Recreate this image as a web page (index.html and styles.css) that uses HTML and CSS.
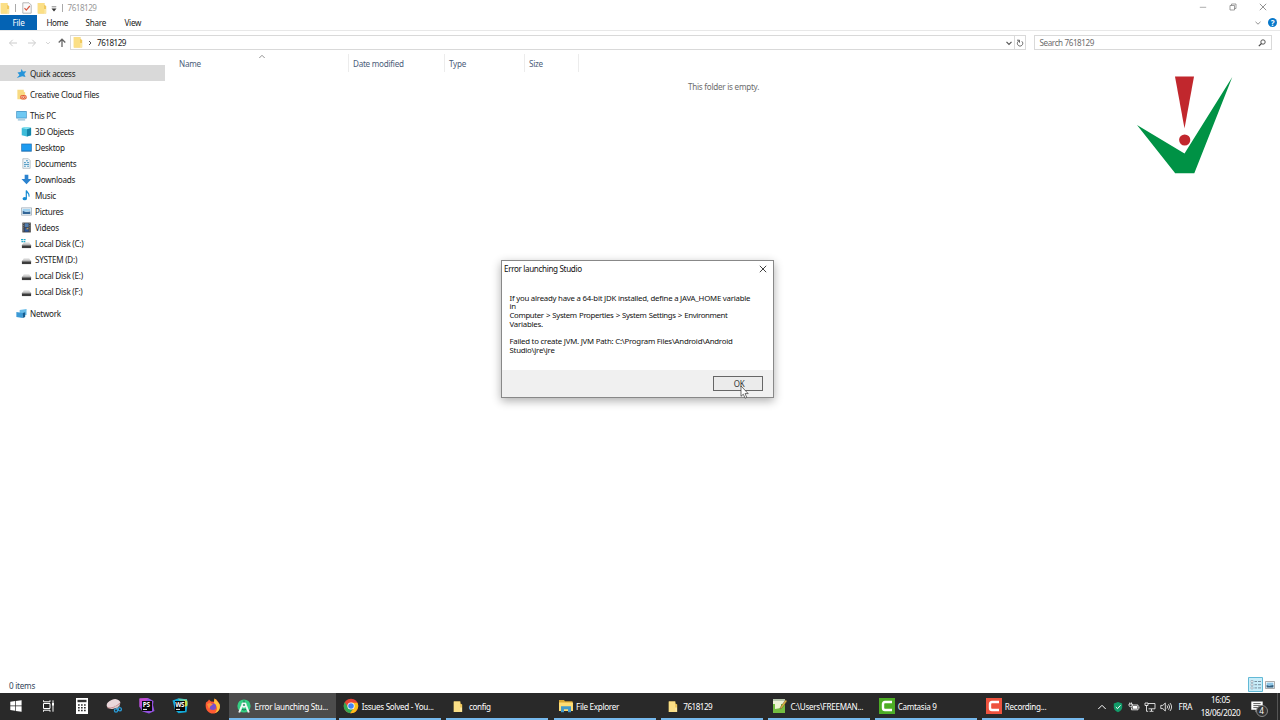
FILE: index.html
```html
<!DOCTYPE html>
<html>
<head>
    <meta charset="utf-8">
    <title>7618129</title>
    <link rel="stylesheet" href="styles.css">
</head>
<body>
    <svg class="defs">
        <symbol id="folder" viewBox="0 0 10 12">
            <path d="M.8 1h6.7v2l1.7 1v7.5H.8z" fill="#f0c95e"/>
            <path d="M.8 1H7v10.5H.8z" fill="#fbdf86"/>
            <path d="M7.3 7h1.5v4.2H7.3z" fill="#fff0b5"/>
        </symbol>
        <symbol id="disk" viewBox="0 0 12 12">
            <path d="M3 4.8h6l2 3.2H1z" fill="#d3d3d3"/>
            <path d="M1 7.5h10V11H1z" fill="#3c3c3c"/>
            <path d="M1 7.5h10v1H1z" fill="#888"/>
        </symbol>
        <symbol id="close" viewBox="0 0 8 8">
            <path d="M.8.8l6.4 6.4M7.2.8L.8 7.2" fill="none" stroke="currentColor" stroke-width=".8"/>
        </symbol>
    </svg>

    <div class="window">
        <div class="titlebar">
            <svg class="title-folder" viewBox="0 0 10 12"><use href="#folder"/></svg>
            <span class="divider"></span>
            <svg class="title-check" viewBox="0 0 10 12"><path d="M.8.8H7L9.2 3v8.2H.8z" fill="#fafafa" stroke="#999" stroke-width=".7"/><path d="M2.5 6.2l1.8 2L7.8 4" fill="none" stroke="#d65a45" stroke-width="1.2"/></svg>
            <svg class="title-folder two" viewBox="0 0 10 12"><use href="#folder"/></svg>
            <svg class="title-drop" viewBox="0 0 6 6"><path d="M.7.8h4.6" stroke="#555" stroke-width=".7"/><path d="M.5 2.5h5L3 5.4z" fill="#333"/></svg>
            <span class="divider"></span>
            <span class="title-name">7618129</span>
            <div class="controls">
                <svg viewBox="0 0 8 8"><path d="M.8 4.3h6.4" stroke="#999" stroke-width=".8"/></svg>
                <svg viewBox="0 0 8 8"><path d="M1 2.5h4.5V7H1zM2.5 2.5V1H7v4.5H5.5" fill="none" stroke="#777" stroke-width=".7"/></svg>
                <svg viewBox="0 0 8 8"><use href="#close"/></svg>
            </div>
        </div>

        <div class="tabs">
            <span class="file">File</span>
            <span class="tab-home">Home</span>
            <span class="tab-share">Share</span>
            <span>View</span>
            <svg class="expand" viewBox="0 0 8 8"><path d="M1.5 2.8L4 5.2l2.5-2.4" fill="none" stroke="#888" stroke-width=".9"/></svg>
            <span class="help">?</span>
        </div>

        <div class="navbar">
            <svg class="arrow-back" viewBox="0 0 10 10"><path d="M9 5H1.5M4.7 1.8L1.5 5l3.2 3.2" fill="none" stroke="#ccc" stroke-width="1"/></svg>
            <svg class="arrow-next" viewBox="0 0 10 10"><path d="M1 5h7.5M5.3 1.8L8.5 5 5.3 8.2" fill="none" stroke="#ccc" stroke-width="1"/></svg>
            <svg class="arrow-drop" viewBox="0 0 6 6"><path d="M1 2l2 2 2-2" fill="none" stroke="#ccc" stroke-width=".8"/></svg>
            <svg class="arrow-up" viewBox="0 0 10 10"><path d="M5 9V1.2M1.7 4.5L5 1.2l3.3 3.3" fill="none" stroke="#666" stroke-width="1.3"/></svg>
            <div class="address">
                <svg class="address-folder" viewBox="0 0 10 12"><use href="#folder"/></svg>
                <svg class="crumb" viewBox="0 0 4 6"><path d="M1 1l2 2-2 2" fill="none" stroke="#444" stroke-width=".9"/></svg>
                <span class="crumb-name">7618129</span>
                <svg class="address-drop" viewBox="0 0 8 8"><path d="M1.5 2.8L4 5.3l2.5-2.5" fill="none" stroke="#555" stroke-width="1.2"/></svg>
                <div class="refresh">
                    <svg viewBox="0 0 8 8"><path d="M3.2 1.8A2.7 2.7 0 1 0 5.8 2.3M1 1.2h2.5v2.5" fill="none" stroke="#555" stroke-width=".9"/></svg>
                </div>
            </div>
            <div class="search">
                <span>Search 7618129</span>
                <svg viewBox="0 0 8 8"><circle cx="5" cy="3" r="2.2" fill="none" stroke="#444" stroke-width=".9"/><path d="M3.5 4.5L.8 7.2" stroke="#444" stroke-width="1.1"/></svg>
            </div>
        </div>

        <div class="main">
            <div class="sidebar">
                <div class="item selected">
                    <svg viewBox="0 0 12 12"><path d="M6 1.2l1.6 2.6 3.7-.3-2.3 3 1.4 3.2-3.6-.8L.8 11l3-3.3L1.6 5l3.5-.6z" fill="#2694d9"/></svg>
                    <span>Quick access</span>
                </div>
                <div class="item gap">
                    <svg viewBox="0 0 12 12"><path d="M1.5.8h7v2l1.5 1v7.4H1.5z" fill="#f8da82"/><rect x="4.5" y="6.5" width="7.2" height="5" rx="2.3" fill="#e2592c"/><circle cx="6.8" cy="9" r="1.2" fill="none" stroke="#fff" stroke-width=".5"/><circle cx="9.3" cy="9" r="1.2" fill="none" stroke="#fff" stroke-width=".5"/></svg>
                    <span>Creative Cloud Files</span>
                </div>
                <div class="item gap">
                    <svg viewBox="0 0 12 12"><path d="M.3 1.2h11.4v8H.3z" fill="#3b8fc4"/><path d="M1 2h10v6.4H1z" fill="#6ec8f2"/><path d="M2 10.8h8" stroke="#6aa6c5"/></svg>
                    <span>This PC</span>
                </div>
                <div class="item sub">
                    <svg viewBox="0 0 12 12"><path d="M.8 2.3L5 1l6 1v8l-4.5 1.5L.8 10z" fill="#3dbcd9"/><path d="M6.5 3.5L11 2v8l-4.5 1.5z" fill="#1585a9"/><path d="M.8 2.3L5 1l6 1-4.5 1.5z" fill="#8ce3f0"/></svg>
                    <span>3D Objects</span>
                </div>
                <div class="item sub">
                    <svg viewBox="0 0 12 12"><path d="M.3 1.8h11.4v8.7H.3z" fill="#1769ae"/><path d="M1 2.5h10v6.9H1z" fill="#1d9bf0"/></svg>
                    <span>Desktop</span>
                </div>
                <div class="item sub">
                    <svg viewBox="0 0 12 12"><path d="M2 .8h6l2 2v8.5H2z" fill="#edf5fa" stroke="#8d9aa3" stroke-width=".6"/><path d="M5.5 3h2M3.3 5h2M6.7 5h2M3.3 7h5.4M3.3 9h2M6.7 9h2" stroke="#3c8dbb" stroke-width="1"/></svg>
                    <span>Documents</span>
                </div>
                <div class="item sub">
                    <svg viewBox="0 0 12 12"><path d="M4 .8h4v4.7h3.5L6 11.3.5 5.5H4z" fill="#2c83cf"/></svg>
                    <span>Downloads</span>
                </div>
                <div class="item sub">
                    <svg viewBox="0 0 12 12"><ellipse cx="4.1" cy="9.5" rx="2.4" ry="1.8" fill="#168bd2"/><path d="M5.8 9.5V.5c.5 2.4 4 3 3 6.8" fill="none" stroke="#168bd2" stroke-width="1.3"/></svg>
                    <span>Music</span>
                </div>
                <div class="item sub">
                    <svg viewBox="0 0 12 12"><path d="M.5 2h11v8H.5z" fill="#eff7fb" stroke="#899aa6" stroke-width=".7"/><path d="M1.8 3.3h8.4V6L8.2 5.5 5 6.5l-3.2-1z" fill="#a1d2f1"/><path d="M1.8 5.2l3.2 1.3 5.2-.5v2.8H1.8z" fill="#326596"/></svg>
                    <span>Pictures</span>
                </div>
                <div class="item sub">
                    <svg viewBox="0 0 12 12"><path d="M1.5.6h9.2v10.8H1.5z" fill="#424242"/><path d="M4 1.4h4.3v4.2H4z" fill="#527eaf"/><path d="M4 6.3h4.3v4.3H4z" fill="#29559a"/><path d="M5 8l3-2v2z" fill="#d7a743"/><path d="M2.7 1.2v9.8M9.5 1.2v9.8" stroke="#999" stroke-width=".8" stroke-dasharray="1 1"/></svg>
                    <span>Videos</span>
                </div>
                <div class="item sub">
                    <svg viewBox="0 0 12 12"><use href="#disk"/><path d="M0 1.2h2.2v1.3H0zM2.8 1.2H5v1.3H2.8zM.5 3.2h2.2v1.3H.5zM3.2 3.2h1.5v1.3H3.2z" fill="#25aac9"/></svg>
                    <span>Local Disk (C:)</span>
                </div>
                <div class="item sub">
                    <svg viewBox="0 0 12 12"><use href="#disk"/></svg>
                    <span>SYSTEM (D:)</span>
                </div>
                <div class="item sub">
                    <svg viewBox="0 0 12 12"><use href="#disk"/></svg>
                    <span>Local Disk (E:)</span>
                </div>
                <div class="item sub">
                    <svg viewBox="0 0 12 12"><use href="#disk"/></svg>
                    <span>Local Disk (F:)</span>
                </div>
                <div class="item gap">
                    <svg viewBox="0 0 12 12"><path d="M4 2.2L11.5 1v6.5L4 8.5z" fill="#69bce8"/><path d="M.4 4.4l7 1.1V11l-7-1.3z" fill="#3c9ad6"/><path d="M7.4 5.5l2.6-1V9.8L7.4 11z" fill="#175d91"/></svg>
                    <span>Network</span>
                </div>
            </div>

            <div class="content">
                <div class="columns">
                    <span>Name<svg class="sort" viewBox="0 0 8 5"><path d="M1.3 4L4 1.3 6.7 4" fill="none" stroke="#777" stroke-width=".8"/></svg></span>
                    <span>Date modified</span>
                    <span>Type</span>
                    <span>Size</span>
                </div>
                <div class="empty">This folder is empty.</div>
            </div>
        </div>

        <div class="status">
            <span>0 items</span>
            <svg class="view-details" viewBox="0 0 15 15"><path d="M.5.5h14v14H.5z" fill="#c8edf9" stroke="#62b9d6"/><path d="M3 3.5h2v2H3zM3 6.7h2v2H3zM3 9.9h2v2H3z" fill="#fff" stroke="#789" stroke-width=".5"/><path d="M6.5 4.5h2.5M10 4.5h3M6.5 7.7h2.5M10 7.7h3M6.5 10.9h2.5M10 10.9h3" stroke="#678" stroke-width=".8"/></svg>
            <svg class="view-large" viewBox="0 0 10 8"><path d="M.5.5h9v7h-9z" fill="#fff" stroke="#888" stroke-width=".7"/><path d="M1.6 1.6h6.8v4.8H1.6z" fill="#8fc6e6"/><path d="M1.6 4l2.5 1 4.3-1v2.4H1.6z" fill="#345e7d"/></svg>
        </div>
    </div>

    <svg class="logo" viewBox="0 0 96 98">
        <path d="M38 .6h19L47.5 52.5z" fill="#c1272d"/>
        <circle cx="47.7" cy="64" r="5.6" fill="#c1272d"/>
        <path d="M0 49L47.5 77.6 95.3 1 57.3 97.3H38.2z" fill="#009245"/>
    </svg>

    <div class="dialog">
        <div class="dialog-title">
            <span>Error launching Studio</span>
            <svg viewBox="0 0 8 8"><use href="#close"/></svg>
        </div>
        <div class="dialog-body">
            <p>If you already have a 64-bit JDK installed, define a JAVA_HOME variable<br>in<br><span class="path">Computer &gt; System Properties &gt; System Settings &gt; Environment</span><br>Variables.</p>
            <p>Failed to create JVM. JVM Path: C:\Program Files\Android\Android<br>Studio\jre\jre</p>
        </div>
        <div class="dialog-footer">
            <button>OK</button>
        </div>
        <svg class="cursor" viewBox="0 0 9 14"><path d="M1 1v10.3l2.3-2.1 1.8 4 1.7-.8L5 8.6h3.2z" fill="#fff" stroke="#333" stroke-width=".7"/></svg>
    </div>

    <div class="taskbar">
        <div class="pinned">
            <svg viewBox="0 0 16 16"><path d="M2.3 3.8l4.8-.7v4.5H2.3zM7.8 3l5.8-.8v5.4H7.8zM2.3 8.3h4.8v4.5l-4.8-.7zM7.8 8.3h5.8v5.4l-5.8-.8z" fill="#fff"/></svg>
            <svg viewBox="0 0 16 16"><path d="M2.5 5.5H9v5H2.5zM2.5 2.3v1.5H9V2.3M2.5 13.7v-1.5H9v1.5M12 2.3v11.4" fill="none" stroke="#fff" stroke-width="1"/><path d="M11 5h2v2.5h-2z" fill="#fff"/></svg>
            <svg viewBox="0 0 16 16"><path d="M2 0h12v16H2z" fill="#fff"/><path d="M3.5 1.8h9v2.4h-9z" fill="#333"/><path d="M4 7h8.5M4 9.8h8.5M4 12.6h8.5" stroke="#333" stroke-width="1.5" stroke-dasharray="1.7 1.3"/></svg>
            <svg viewBox="0 0 16 16"><ellipse cx="7.5" cy="6" rx="7" ry="4.6" transform="rotate(-18 7.5 6)" fill="#ead7da"/><path d="M1.5 9.8Q8 11 14 5" fill="none" stroke="#c98c90"/><path d="M8.5 7.5l4 4.5M14 7.5L10 11" stroke="#ccc" stroke-width=".8"/><circle cx="10" cy="12.5" r="1.6" fill="none" stroke="#2b9bd6" stroke-width="1.3"/><circle cx="13.8" cy="11.3" r="1.6" fill="none" stroke="#2b9bd6" stroke-width="1.3"/></svg>
            <svg viewBox="0 0 16 16"><path d="M.5.5L9 0l5.5 3-.5 4 1.5 6-5.5 2.5-6.5-2L.5 9z" fill="#9351df"/><path d="M.5.5L9 0 4 7 .5 9z" fill="#c64cd0"/><path d="M3 3h10v10H3z" fill="#080808"/><text class="app-letters" x="3.7" y="8.6">PS</text><path d="M4 11.4h4" stroke="#fff"/></svg>
            <svg viewBox="0 0 16 16"><path d="M.5 2.5L6 .5l9 .7.5 5-1 8-8 1L3 12z" fill="#13a9d8"/><path d="M6 .5l9 .7.5 5-3.5 2z" fill="#5fcbb0"/><path d="M12 2l3.3 1v5L12 9z" fill="#c9df4b"/><path d="M3 3h10v10H3z" fill="#080808"/><text class="app-letters" x="3.2" y="8.6">WS</text><path d="M4 11.4h4" stroke="#fff"/></svg>
            <svg viewBox="0 0 16 16"><path d="M1 4.5L3 3l1-1.5 2 2 3 .2L9 1.5 11 1l3 4c2.4 5-1 10.5-6 10.5S-.5 11 1 4.5z" fill="#ff5a33"/><path d="M9.5.3L12 3l2.5 3c1.4 4-.8 8-4.5 9 3-3 2.5-7-1-10z" fill="#ffc43a"/><circle cx="7.8" cy="8.8" r="3.3" fill="#7751cc"/><path d="M2 6l3-1 3 1.6-2.5 1.5L4 11z" fill="#ff913c"/></svg>
        </div>
        <div class="task active">
            <svg viewBox="0 0 16 16"><circle cx="8" cy="8" r="6.6" fill="#35cf83"/><path d="M6 7.5l-2.8 7M10 7.5l2.8 7" stroke="#f2f7f4" stroke-width="2"/><circle cx="8" cy="7" r="2.7" fill="#f2f7f4"/><circle cx="8" cy="7" r="1.1" fill="#2f8f68"/><path d="M8 2.5v2.2M6 11.5q2 1 4 0" fill="none" stroke="#175c48" stroke-width=".9"/></svg>
            <span>Error launching Stu...</span>
        </div>
        <div class="task">
            <svg viewBox="0 0 16 16"><circle cx="8" cy="8" r="7.3" fill="#e84335"/><path d="M1.7 4.3A7.3 7.3 0 0 0 7.2 15.2L11 9 5 9z" fill="#34a853"/><path d="M7.2 15.2A7.3 7.3 0 0 0 14.4 4.7H8l3 5z" fill="#fbc116"/><circle cx="8" cy="8" r="3.6" fill="#fff"/><circle cx="8" cy="8" r="2.8" fill="#4285f4"/></svg>
            <span>Issues Solved - You...</span>
        </div>
        <div class="task">
            <svg class="task-folder" viewBox="0 0 10 12"><use href="#folder"/></svg>
            <span>config</span>
        </div>
        <div class="task">
            <svg viewBox="0 0 16 16"><path d="M1 2h5l1 1.3h7.5V13H1z" fill="#d9a734"/><path d="M1 4.5h14V13H1z" fill="#ffdc73"/><path d="M3 14.3V8.3h10v6h-3v-3H6v3z" fill="#4299cb"/></svg>
            <span>File Explorer</span>
        </div>
        <div class="task">
            <svg class="task-folder" viewBox="0 0 10 12"><use href="#folder"/></svg>
            <span class="crumb-name">7618129</span>
        </div>
        <div class="task">
            <svg viewBox="0 0 16 16"><path d="M1 1h12v14H1z" fill="#edf2d6"/><path d="M1 6h12v9H1z" fill="#73bd40"/><path d="M1 1h12v2H1z" fill="#b7c6ac"/><path d="M3 6l6-1v5l-6 1z" fill="#eef4d1"/><path d="M8.5 9l5-7 1.5 1-5 7-2 1z" fill="#e1b240" stroke="#665534" stroke-width=".5"/></svg>
            <span>C:\Users\FREEMAN...</span>
        </div>
        <div class="task">
            <svg viewBox="0 0 16 16"><path d="M0 0h16v16H0z" fill="#4dad25"/><path d="M13 4H6Q4 4 4 6v4q0 2 2 2h7" fill="none" stroke="#fff" stroke-width="2.4"/></svg>
            <span>Camtasia 9</span>
        </div>
        <div class="task">
            <svg viewBox="0 0 16 16"><path d="M0 0h16v16H0z" fill="#ee523e"/><path d="M13 4H6Q4 4 4 6v4q0 2 2 2h7" fill="none" stroke="#fff" stroke-width="2.4"/></svg>
            <span>Recording...</span>
        </div>
        <div class="tray">
            <svg viewBox="0 0 12 12"><path d="M2.3 8L6 4.3 9.7 8" fill="none" stroke="#fff" stroke-width="1"/></svg>
            <svg viewBox="0 0 12 12"><path d="M6 1l4.2 1.5v3.7q0 3-4.2 5-4.2-2-4.2-5V2.5z" fill="#129b69"/><path d="M3.8 6l1.7 1.7 3-3.4" fill="none" stroke="#fff" stroke-width="1"/></svg>
            <svg viewBox="0 0 12 12"><path d="M3.5 4H10v4.8H3.5V6.5M11 5.5v2M1 3h3.3v1.3q0 1.4-1.6 1.4T1 4.3zM1.8 1.5V3M3.5 1.5V3" fill="none" stroke="#fff" stroke-width=".8"/><path d="M4.6 5h4.5v2.8H4.6z" fill="#fff"/></svg>
            <svg viewBox="0 0 12 12"><path d="M4 2.5h7v5.3H4.5M7.5 8v2M5.5 10.3h4M1 2h3v2.5H1zM2.5 4.5v5.8h1.7" fill="none" stroke="#fff" stroke-width=".8"/></svg>
            <svg viewBox="0 0 12 12"><path d="M.8 4.4h2L5.3 2v8L2.8 7.6h-2zM7 4.5q1.3 1.5 0 3M8.5 3.2q2.3 2.8 0 5.6M10 2q3.2 4 0 8" fill="none" stroke="#fff" stroke-width=".8"/></svg>
            <span class="lang">FRA</span>
            <div class="clock">16:05<br>18/06/2020</div>
            <div class="notify">
                <svg viewBox="0 0 12 12"><path d="M.3.5h11.4v8.3H7l-2.3 2.4V8.8H.3z" fill="#fff"/><path d="M2.3 2.6h7.4M2.3 4.6h7.4M2.3 6.6h5" stroke="#333" stroke-width=".8"/></svg>
                <span class="count">4</span>
            </div>
            <span class="show-desktop"></span>
        </div>
    </div>
</body>
</html>
```

FILE: styles.css
```css
body {
    margin: 0;
    width: 1280px;
    height: 720px;
    overflow: hidden;
    background: #fff;
    color: #222;
    font-family: "Noto Sans", "Open Sans", sans-serif;
    font-size: 8.1px;
    letter-spacing: -.25px;
    line-height: 16px;
    display: flex;
    flex-direction: column;
}

.defs {
    display: none;
}

svg {
    display: block;
    flex: none;
}

span {
    white-space: nowrap;
}

.window {
    height: 693px;
    display: flex;
    flex-direction: column;
}

/* title bar */
.titlebar {
    height: 15px;
    display: flex;
    align-items: center;
    color: #999;
}

.title-folder {
    width: 10px;
    height: 12px;
}

.divider {
    width: 1px;
    height: 8px;
    margin-left: 5px;
    background: #aaa;
}

.title-check {
    width: 10px;
    height: 12px;
    margin-left: 6px;
}

.two {
    margin-left: 5px;
}

.title-drop {
    width: 6px;
    height: 6px;
    margin-left: 4px;
    margin-top: 2px;
}

.title-name {
    margin-left: 4.5px;
    letter-spacing: -.5px;
}

.crumb-name {
    letter-spacing: -.5px;
}

.controls {
    margin-left: auto;
    margin-right: 13px;
    display: flex;
    gap: 22px;
    color: #777;
}

.controls svg {
    width: 8px;
    height: 8px;
    margin-top: -1px;
}

/* ribbon */
.tabs {
    height: 15px;
    display: flex;
    align-items: center;
    border-bottom: 1px solid #e8e8e8;
}

.file {
    width: 37px;
    height: 15px;
    line-height: 16px;
    background: #0463b4;
    color: #fff;
    text-align: center;
    margin-right: 9.5px;
}

.tab-home {
    width: 39px;
    letter-spacing: -.4px;
}

.tab-share {
    width: 39px;
}

.expand {
    width: 8px;
    height: 8px;
    margin-left: auto;
}

.help {
    width: 9px;
    height: 9px;
    line-height: 9px;
    border-radius: 50%;
    background: #0878ca;
    color: #fff;
    font-weight: bold;
    text-align: center;
    margin: 0 3px 0 6px;
}

/* address bar */
.navbar {
    height: 23px;
    display: flex;
    align-items: center;
}

.arrow-back,
.arrow-next,
.arrow-up {
    width: 10px;
    height: 10px;
    margin-left: 8px;
}

.arrow-next {
    margin-left: 9px;
}

.arrow-drop {
    width: 6px;
    height: 6px;
    margin-left: 8px;
}

.arrow-up {
    margin-left: 6px;
}

.address {
    box-sizing: border-box;
    width: 956px;
    height: 15px;
    margin-left: 3px;
    border: 1px solid #d9d9d9;
    display: flex;
    align-items: center;
    line-height: 13px;
}

.address-folder {
    width: 10px;
    height: 12px;
    margin: 0 0 1px 2px;
}

.crumb {
    width: 4px;
    height: 6px;
    margin: 0 5px 0 5px;
}

.address-drop {
    width: 8px;
    height: 8px;
    margin-left: auto;
    margin-right: 1px;
}

.refresh {
    height: 13px;
    border-left: 1px solid #d9d9d9;
    display: flex;
    align-items: center;
    padding: 0 1px;
}

.refresh svg {
    width: 8px;
    height: 8px;
}

.search {
    box-sizing: border-box;
    width: 238px;
    height: 15px;
    margin-left: 8px;
    border: 1px solid #d9d9d9;
    display: flex;
    align-items: center;
    justify-content: space-between;
    padding: 0 5px 0 4.5px;
    line-height: 13px;
    letter-spacing: -.4px;
    color: #6d6d6d;
}

.search svg {
    width: 8px;
    height: 8px;
}

/* sidebar and file list */
.main {
    flex: 1;
    display: flex;
}

.sidebar {
    width: 165px;
    padding-top: 11px;
}

.item {
    height: 16px;
    display: flex;
    align-items: center;
    gap: 3px;
    padding-left: 16px;
}

.item svg {
    width: 11px;
    height: 11px;
}

.item span {
    padding-top: 1px;
}

.selected {
    background: #d9d9d9;
}

.gap {
    margin-top: 5.4px;
}

.sub {
    padding-left: 21px;
}

.content {
    flex: 1;
}

.columns {
    display: flex;
    height: 18px;
    color: #4c607a;
}

.columns span {
    position: relative;
    box-sizing: border-box;
    border-right: 1px solid #ececec;
    padding-left: 4px;
    line-height: 19px;
}

.columns span:nth-child(1) {
    width: 184px;
    padding-left: 14px;
}

.columns span:nth-child(2) {
    width: 96px;
}

.columns span:nth-child(3) {
    width: 80px;
}

.columns span:nth-child(4) {
    width: 54px;
}

.sort {
    position: absolute;
    left: 93px;
    top: 0;
    width: 8px;
    height: 5px;
}

.empty {
    margin-top: 7px;
    padding-left: 2px;
    text-align: center;
    color: #6d6d6d;
}

.status {
    height: 17px;
    display: flex;
    align-items: center;
    padding-left: 9px;
    color: #34465a;
}

.status span {
    padding-top: 2px;
}

.view-details {
    width: 15px;
    height: 15px;
    margin-left: auto;
}

.view-large {
    width: 10px;
    height: 8px;
    margin: 0 5px 0 2px;
}

.logo {
    position: absolute;
    left: 1137px;
    top: 76px;
    width: 96px;
    height: 98px;
}

/* error dialog */
.dialog {
    position: absolute;
    left: 501px;
    top: 260px;
    width: 271px;
    height: 136px;
    border: 1px solid #888;
    background: #fff;
    box-shadow: 0 3px 9px rgba(0, 0, 0, .32);
    display: flex;
    flex-direction: column;
    color: #111;
}

.dialog-title {
    height: 16px;
    display: flex;
    align-items: center;
    justify-content: space-between;
    padding: 0 6px 0 2px;
}

.dialog-title span {
    letter-spacing: -.35px;
}

.dialog-title svg {
    width: 8px;
    height: 8px;
}

.dialog-body {
    flex: 1;
    padding: 16.5px 7px 0 7.5px;
    font-size: 7.8px;
    letter-spacing: -.22px;
    line-height: 8.7px;
    white-space: nowrap;
}

.dialog-body p {
    margin: 0 0 8.7px;
}

.path {
    letter-spacing: -.35px;
    word-spacing: .6px;
}

.dialog-footer {
    height: 27px;
    background: #f0f0f0;
    display: flex;
    align-items: center;
    justify-content: flex-end;
    padding-right: 10px;
}

.dialog-footer button {
    width: 50px;
    height: 15px;
    padding: 0 0 0 2px;
    border: 1px solid #666;
    background: #ebebeb;
    color: #333;
    font-family: inherit;
    font-size: 8px;
    letter-spacing: -.3px;
    line-height: 13px;
}

.cursor {
    position: absolute;
    left: 238px;
    top: 124px;
    width: 9px;
    height: 14px;
}

/* taskbar */
.taskbar {
    height: 27px;
    background: #292929;
    color: #fff;
    display: flex;
}

.pinned {
    width: 229px;
    display: flex;
    align-items: center;
    justify-content: space-around;
}

.pinned svg,
.task svg {
    width: 16px;
    height: 16px;
    margin-bottom: 1px;
}

.app-letters {
    fill: #fff;
    font-family: "Open Sans", sans-serif;
    font-size: 6.4px;
    font-weight: bold;
}

.task {
    box-sizing: border-box;
    width: 107.2px;
    padding-left: 7px;
    display: flex;
    align-items: center;
    gap: 2.5px;
    line-height: 15px;
    letter-spacing: -.3px;
    background: linear-gradient(#76b9ed, #76b9ed) 3px 25px / 102px 2px no-repeat;
}

.active {
    background-color: #4c4c4c;
    background-position: 0 25px;
    background-size: 107px 2px;
}

.task svg.task-folder {
    width: 10px;
    height: 13px;
    margin: 0 3px;
}

.tray {
    flex: 1;
    display: flex;
    align-items: center;
    padding-left: 9px;
    gap: 4px;
}

.tray svg {
    width: 12px;
    height: 12px;
}

.lang {
    width: 15px;
    margin-left: 3px;
    letter-spacing: -.2px;
}

.clock {
    margin-left: 3px;
    width: 40px;
    line-height: 12.5px;
    letter-spacing: -.35px;
    text-align: center;
}

.notify {
    position: relative;
    margin-left: 6px;
}

.count {
    position: absolute;
    left: 5px;
    top: 4px;
    width: 10px;
    height: 10px;
    border: 1px solid #888;
    border-radius: 50%;
    background: #333;
    line-height: 10px;
    text-align: center;
}

.show-desktop {
    width: 1px;
    height: 27px;
    margin-left: auto;
    margin-right: 2px;
    background: #555;
}
```
